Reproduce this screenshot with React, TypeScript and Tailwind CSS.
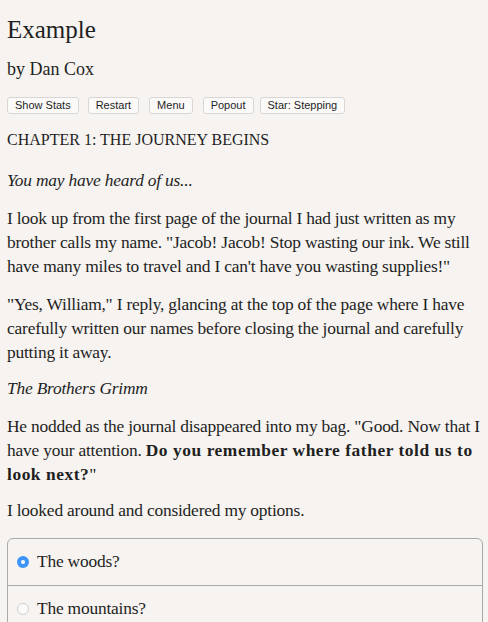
import React from "react";

const serif = { fontFamily: '"Liberation Serif", "Times New Roman", serif' };

function Btn({ children, className = "" }: { children: React.ReactNode; className?: string }) {
  return (
    <button
      className={
        "h-[17px] px-[7px] border border-[#d9d7d5] rounded-[3px] bg-[#fbfaf9] text-[11px] leading-[13px] text-[#1e1e1e] font-['Liberation_Sans',Arial,sans-serif] " +
        className
      }
    >
      {children}
    </button>
  );
}

function Radio({ checked }: { checked?: boolean }) {
  return checked ? (
    <span className="mt-[7px] flex h-[12px] w-[12px] shrink-0 items-center justify-center rounded-full bg-[#3d94f6]">
      <span className="h-[4px] w-[4px] rounded-full bg-white" />
    </span>
  ) : (
    <span className="mt-[7px] h-[12px] w-[12px] shrink-0 rounded-full border border-[#cfcfcf] bg-[#fbfbfb]" />
  );
}

export default function App() {
  return (
    <div
      className="min-h-screen bg-[#f6f3f0] pl-[7px] pr-[5px] pt-[15px] pb-[20px] text-[#1f1f1f]"
      style={serif}
    >
      <h1 className="text-[25px] leading-[30px] font-normal">Example</h1>
      <h2 className="mt-[12px] text-[18px] leading-[24px] font-normal">by Dan Cox</h2>

      <div className="mt-[16px] flex items-start">
        <Btn>Show Stats</Btn>
        <Btn className="ml-[9px]">Restart</Btn>
        <Btn className="ml-[10px]">Menu</Btn>
        <Btn className="ml-[10px]">Popout</Btn>
        <Btn className="ml-[6px]">Star: Stepping</Btn>
      </div>

      <h3 className="mt-[14px] text-[16px] leading-[24px] font-normal uppercase">
        Chapter 1: The Journey Begins
      </h3>

      <div className="text-[17.4px] leading-[24px] tracking-[-0.2px]">
        <p className="mt-[16px] italic">You may have heard of us...</p>
        <p className="mt-[14px]">
          I look up from the first page of the journal I had just written as my brother calls my name.
          "Jacob! Jacob! Stop wasting our ink. We still have many miles to travel and I can't have you
          wasting supplies!"
        </p>
        <p className="mt-[14px]">
          "Yes, William," I reply, glancing at the top of the page where I have carefully written our
          names before closing the journal and carefully putting it away.
        </p>
        <p className="mt-[12px] italic">The Brothers Grimm</p>
        <p className="mt-[14px]">
          He nodded as the journal disappeared into my bag. "Good. Now that I have your attention.{" "}
          <strong className="font-bold tracking-[0.55px]">
            Do you remember where father told us to look next?
          </strong>
          "
        </p>
        <p className="mt-[12px]">I looked around and considered my options.</p>

        <div className="mt-[16px] rounded-[6px] border border-[#a9a9a9]">
          <div className="flex items-start gap-[8px] pl-[9px] pt-[10px] pb-[12px] border-b border-[#a9a9a9]">
            <Radio checked />
            <span>The woods?</span>
          </div>
          <div className="flex items-start gap-[8px] pl-[9px] pt-[10px] pb-[12px]">
            <Radio />
            <span>The mountains?</span>
          </div>
        </div>
      </div>
    </div>
  );
}
